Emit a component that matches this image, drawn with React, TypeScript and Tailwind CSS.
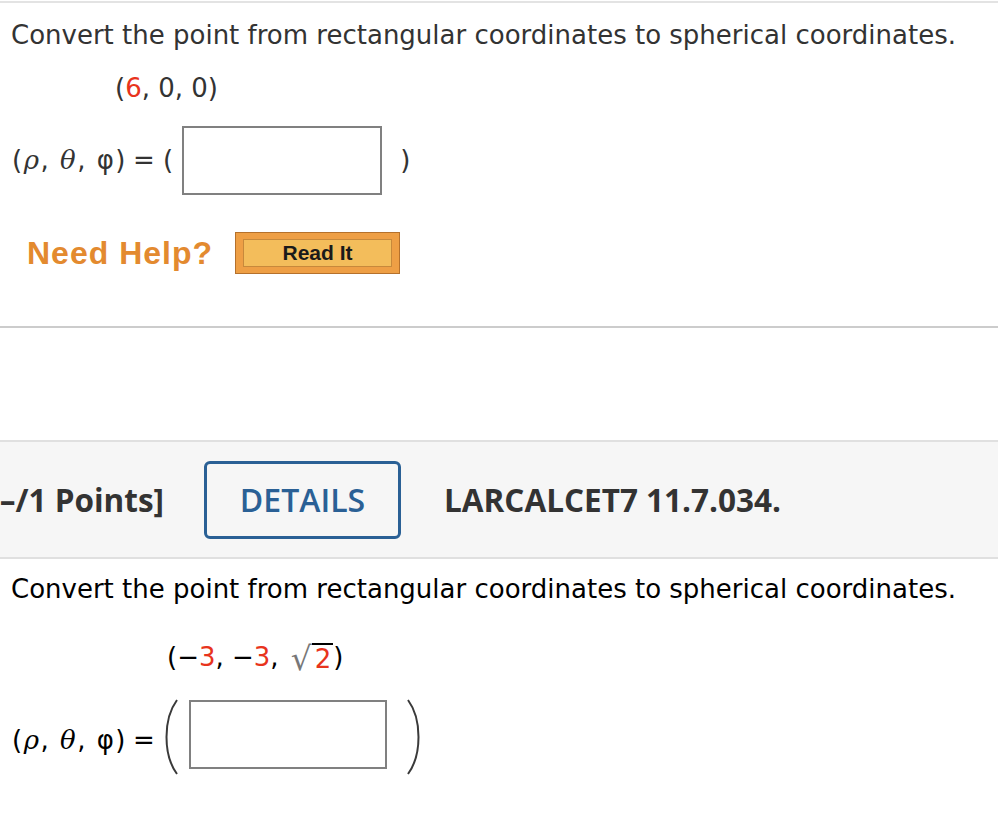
import React from "react";

const verdana = { fontFamily: '"DejaVu Sans", Verdana, sans-serif' };

function AnswerBox({ w }: { w: number }) {
  return (
    <div
      className={`${w === 200 ? "w-[200px]" : "w-[198px]"} h-[69px] border-2 border-[#808080] bg-white`}
    />
  );
}

function Greek() {
  return (
    <span className="w-[121px] shrink-0 whitespace-nowrap tracking-[1.5px]">
      (<span className="italic font-['DejaVu_Serif',serif]">ρ</span>,{" "}
      <span className="italic font-['DejaVu_Serif',serif]">θ</span>, φ)
    </span>
  );
}

function ProblemOne() {
  return (
    <div className="flex flex-col text-[#333] text-[26px]" style={verdana}>
      <div className="h-[64px] flex items-center pl-[11px] whitespace-nowrap">
        Convert the point from rectangular coordinates to spherical coordinates.
      </div>
      <div className="h-[42px] flex items-center pl-[115px]">
        (<span className="text-[#e8341c]">6</span>, 0, 0)
      </div>
      <div className="h-[102px] flex items-center pl-[12px]">
        <Greek />
        <span className="w-[30px] shrink-0">=</span>
        <span className="shrink-0">(</span>
        <div className="ml-[9px]">
          <AnswerBox w={200} />
        </div>
        <span className="ml-[18px]">)</span>
      </div>
      <div className="h-[84px] flex items-center pl-[27px]">
        <span className="text-[32px] font-bold tracking-[1px] text-[#e38a2f] font-['Liberation_Sans',Arial,sans-serif]">
          Need Help?
        </span>
        <button className="ml-[22px] w-[165px] h-[42px] border border-[#b5712c] bg-[#ee9f45] px-[7px] py-[6px]">
          <div className="h-full w-full border border-[#c7893b] bg-[#f3bd5b] flex items-center justify-center font-['Liberation_Sans',Arial,sans-serif] font-bold text-[21px] text-[#1a1a1a]">
            Read It
          </div>
        </button>
      </div>
    </div>
  );
}

function Header() {
  return (
    <div className="border-y-2 border-y-[#e0e0e0] bg-[#f6f6f6] h-[119px] flex items-center font-['Open_Sans',sans-serif] font-bold text-[31.5px] text-[#333]">
      <div className="w-[164px] flex justify-end whitespace-nowrap">[–/1 Points]</div>
      <div className="ml-[40px] w-[197px] h-[78px] rounded-[6px] border-[3px] border-[#2a6095] flex items-center justify-center text-[#2a6095] font-semibold text-[32px]">
        DETAILS
      </div>
      <div className="ml-[43px] whitespace-nowrap">LARCALCET7 11.7.034.</div>
    </div>
  );
}

function BigParen({ side }: { side: "l" | "r" }) {
  return (
    <svg width="18" height="76" viewBox="0 0 18 76">
      {side === "l" ? (
        <path d="M15 1 C1 20 1 56 15 75" fill="none" stroke="#3a3a3a" strokeWidth="2" />
      ) : (
        <path d="M3 1 C17 20 17 56 3 75" fill="none" stroke="#3a3a3a" strokeWidth="2" />
      )}
    </svg>
  );
}

function ProblemTwo() {
  return (
    <div className="flex flex-col text-black text-[26px]" style={verdana}>
      <div className="h-[60px] flex items-center pl-[11px] whitespace-nowrap">
        Convert the point from rectangular coordinates to spherical coordinates.
      </div>
      <div className="h-[76px] flex items-center pl-[167px] whitespace-nowrap">
        (−<span className="text-[#e8341c]">3</span>, −<span className="text-[#e8341c]">3</span>,
        <span className="text-[#777] ml-[12px] text-[33px] leading-none mt-[2px]">√</span>
        <span className="text-[#e8341c] border-t-2 border-black leading-[28px] pl-[3px] pr-[2px] mt-[2px]">2</span>)
      </div>
      <div className="h-[84px] flex items-center pl-[12px]">
        <span className="flex mt-[6px]">
          <Greek />
          <span className="w-[17px] shrink-0">=</span>
        </span>
        <div className="ml-[12px]">
          <BigParen side="l" />
        </div>
        <div className="ml-[9px] mb-[6px]">
          <AnswerBox w={198} />
        </div>
        <div className="ml-[18px]">
          <BigParen side="r" />
        </div>
      </div>
    </div>
  );
}

export default function App() {
  return (
    <div className="w-[998px] h-[820px] overflow-hidden bg-white">
      <div className="mt-[1px] h-[2px] bg-[#e3e3e3]" />
      <ProblemOne />
      <div className="h-[2px] bg-[#cccccc] mt-[31px]" />
      <div className="h-[112px]" />
      <Header />
      <ProblemTwo />
    </div>
  );
}
